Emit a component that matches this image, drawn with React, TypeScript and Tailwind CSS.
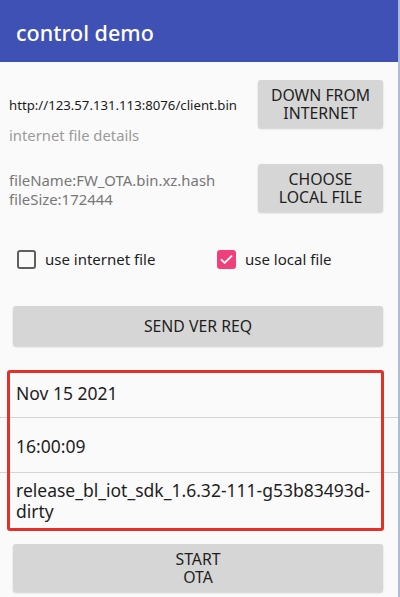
import React from "react";

function Btn({ children, className }: { children: React.ReactNode; className: string }) {
  return (
    <div
      className={
        "flex items-center justify-center rounded-[3px] bg-[#d6d6d6] text-center text-[15.8px] leading-[18.5px] text-[#1e1e1e] shadow-[0_1px_2px_rgba(0,0,0,0.18)] " +
        className
      }
    >
      {children}
    </div>
  );
}

export default function App() {
  return (
    <div className="flex h-[597px] w-full bg-[#aebcd8] font-['Noto_Sans',sans-serif]">
      <div className="relative flex h-[597px] w-[398px] flex-col overflow-hidden bg-[#fafafa]">
        <div className="flex h-[62px] items-center bg-[#3f51b5] pl-[16px] pt-[4px] text-[21.5px] font-medium text-white">
          control demo
        </div>

        <div className="flex h-[102px] justify-between pt-[18px]">
          <div className="flex flex-col pl-[9px] pt-[15px]">
            <div className="text-[13.2px] leading-[20px] text-[#1a1a1a]">http://123.57.131.113:8076/client.bin</div>
            <div className="mt-[10px] text-[14.8px] leading-[20px] text-[#9a9a9a]">internet file details</div>
          </div>
          <Btn className="mr-[15px] h-[48px] w-[125px]">
            DOWN FROM
            <br />
            INTERNET
          </Btn>
        </div>

        <div className="flex h-[48px] justify-between">
          <div className="flex flex-col pl-[9px] pt-[7px] text-[14.9px] leading-[18.5px] text-[#777777]">
            <div>fileName:FW_OTA.bin.xz.hash</div>
            <div>fileSize:172444</div>
          </div>
          <Btn className="mr-[15px] h-[48px] w-[125px]">
            CHOOSE
            <br />
            LOCAL FILE
          </Btn>
        </div>

        <div className="flex h-[94px] items-center">
          <div className="flex w-[217px] items-center pl-[17px]">
            <div className="h-[19px] w-[19px] rounded-[3px] border-2 border-[#5f5f5f]" />
            <span className="ml-[9px] text-[15px] text-[#1e1e1e]">use internet file</span>
          </div>
          <div className="flex items-center">
            <div className="flex h-[19px] w-[19px] items-center justify-center rounded-[3px] bg-[#f0407c]">
              <svg width="15" height="15" viewBox="0 0 24 24" fill="none">
                <path d="M4 12.5l5 5L20 6.5" stroke="white" strokeWidth="3" strokeLinecap="round" strokeLinejoin="round" />
              </svg>
            </div>
            <span className="ml-[9px] text-[15px] text-[#1e1e1e]">use local file</span>
          </div>
        </div>

        <Btn className="ml-[13px] mr-[15px] h-[40px]">SEND VER REQ</Btn>

        <div className="mt-[21px] flex flex-col text-[17.5px] text-[#1e1e1e]">
          <div className="flex h-[50px] items-center pl-[16px] pt-[2px]">Nov 15 2021</div>
          <div className="h-px bg-[#d4d4d4]" />
          <div className="flex h-[54px] items-center pl-[16px] pt-[3px]">16:00:09</div>
          <div className="h-px bg-[#d4d4d4]" />
          <div className="h-[71px] pl-[16px] pr-[17px] pt-[7px] leading-[21px]">
            release_bl_iot_sdk_1.6.32-111-g53b83493d-dirty
          </div>
        </div>

        <Btn className="ml-[13px] mr-[15px] h-[48px]">
          START
          <br />
          OTA
        </Btn>

        <div className="pointer-events-none absolute left-[7px] top-[370px] h-[161px] w-[377px] rounded-[3px] border-[3px] border-[#e5302a]" />
      </div>
    </div>
  );
}
